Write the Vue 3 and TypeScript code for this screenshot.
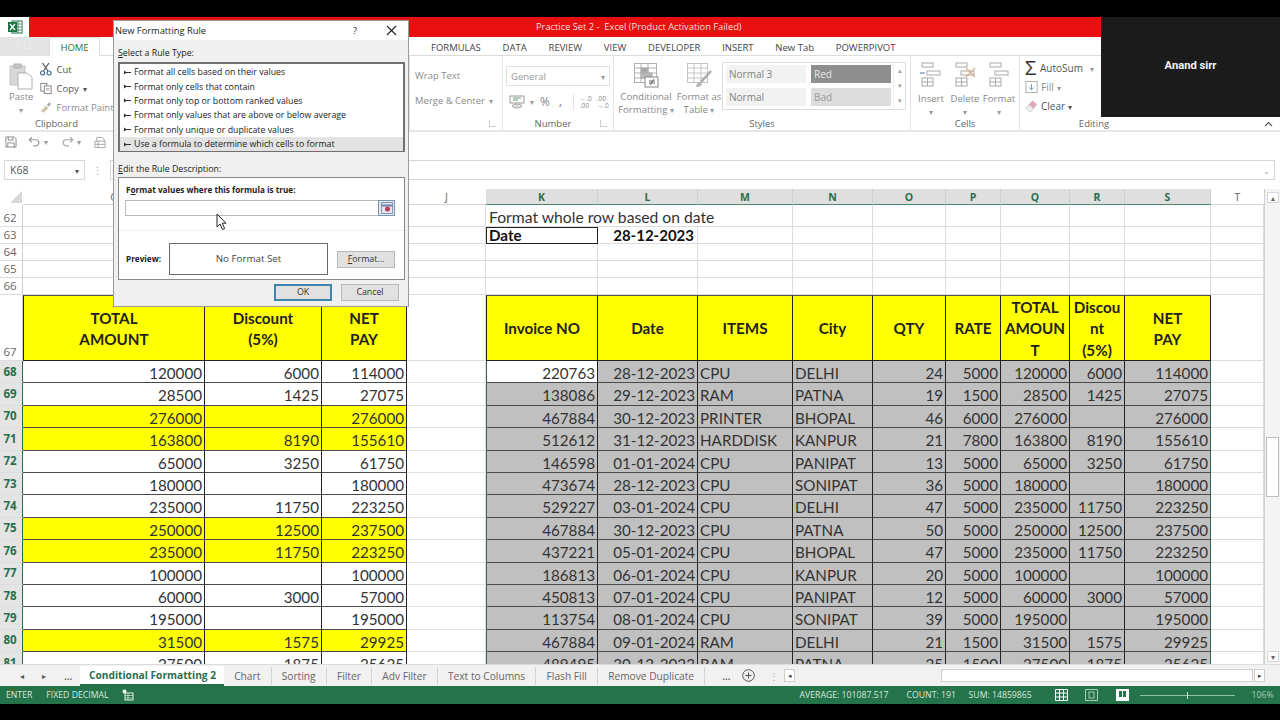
<template>
  <div class="screen">
    <div class="band-top"></div>

    <div class="titlebar">
      <div class="xl-box">
        <svg width="16" height="16" viewBox="0 0 16 16">
          <rect x="5" y="2" width="10" height="12" fill="#fff" stroke="#1f7244" />
          <path d="M8 5h6M8 8h6M8 11h6M11 2v12" stroke="#1f7244" stroke-width=".8" />
          <rect x="1" y="3" width="9" height="10" fill="#1f7244" />
          <path d="M3 5l5 6M8 5l-5 6" stroke="#fff" stroke-width="1.3" />
        </svg>
      </div>
      <div class="title">Practice Set 2 -&nbsp; Excel (Product Activation Failed)</div>
    </div>

    <div class="tabs">
      <div class="tab-file">FILE</div>
      <div class="tab-home">HOME</div>
      <div v-for="t in ribbonTabs" :key="t" class="tab">{{ t }}</div>
    </div>

    <div class="ribbon">
      <section class="grp g-clip">
        <div class="grp-body clip-body">
          <div class="big paste">
            <svg width="24" height="27" viewBox="0 0 24 27">
              <rect x="1" y="3" width="15" height="19" fill="#d8d8d8" stroke="#c4c4c4" />
              <rect x="5" y="1" width="7" height="4" fill="#c4c4c4" stroke="#b0b0b0" />
              <path d="M9 10h9l5 4v12H9z" fill="#fff" stroke="#b0b0b0" />
            </svg>
            <span>Paste</span>
            <i class="car">▾</i>
          </div>
          <div class="stack">
            <div class="si">
              <svg width="12" height="14" viewBox="0 0 12 14" fill="none" stroke="#3f6f9f" stroke-width="1.2">
                <circle cx="2.5" cy="11" r="2" />
                <circle cx="9" cy="11" r="2" />
                <path d="M3.5 9L9 1M8 9L2.5 1" stroke="#555" />
              </svg>
              Cut
            </div>
            <div class="si">
              <svg width="12" height="13" viewBox="0 0 14 14" fill="#fff" stroke="#777">
                <rect x="1" y="1" width="7" height="9" />
                <rect x="5" y="4" width="8" height="9" />
                <path d="M7 7h4M7 9h4" stroke-width=".7" />
              </svg>
              Copy <i class="car dark">▾</i>
            </div>
            <div class="si faint">
              <svg width="12" height="13" viewBox="0 0 14 14">
                <path d="M1 11l6-6 3 3-6 5z" fill="#d0c4a8" />
                <path d="M8 4l3-3 2 2-3 3z" fill="#a9a9a9" />
              </svg>
              Format Painte
            </div>
          </div>
        </div>
        <div class="grp-label">Clipboard</div>
      </section>

      <section class="grp g-align">
        <div class="grp-body align-body">
          <div class="si faint">Wrap Text</div>
          <div class="si faint">Merge &amp; Center <i class="car">▾</i></div>
        </div>
        <div class="grp-label"></div>
        <span class="launcher"></span>
      </section>

      <section class="grp g-num">
        <div class="grp-body num-body">
          <div class="combo">General <i class="car">▾</i></div>
          <div class="num-tools">
            <svg width="16" height="14" viewBox="0 0 16 14">
              <rect x="1" y="1" width="14" height="7" fill="#fff" stroke="#999" />
              <path d="M4 3h8M4 5h5" stroke="#6a9a7c" />
              <ellipse cx="8" cy="11" rx="5" ry="2" fill="#ddd" stroke="#aaa" />
            </svg>
            <i class="car">▾</i>
            <span class="pct">%</span>
            <span class="comma">,</span>
            <b class="tool-sep"></b>
            <span class="dec">←.0<br />.00</span>
            <span class="dec">.00<br />→.0</span>
          </div>
        </div>
        <div class="grp-label">Number</div>
        <span class="launcher"></span>
      </section>

      <section class="grp g-styles">
        <div class="grp-body styles-body">
          <div class="big cf">
            <svg width="25" height="25" viewBox="0 0 25 25" fill="none" stroke="#b0b0b0">
              <rect x=".5" y=".5" width="22" height="19" fill="#fff" />
              <path d="M.5 5h22M.5 10h22M.5 15h22M7 .5v19M14 .5v19" />
              <rect x="7" y="5" width="7" height="5" fill="#a8a8a8" />
              <rect x="7" y="10" width="11" height="5" fill="#b8b8b8" />
              <rect x="11" y="14" width="13" height="10" fill="#fff" stroke="#888" />
              <path d="M15 20h6M15 18h6M20 16l-4 6" stroke="#666" />
            </svg>
            <span>Conditional<br />Formatting <i class="car">▾</i></span>
          </div>
          <div class="big fat">
            <svg width="25" height="25" viewBox="0 0 25 25" fill="none" stroke="#c4c4c4">
              <rect x=".5" y=".5" width="20" height="19" fill="#fff" />
              <path d="M.5 5h20M.5 10h20M.5 15h20M7 .5v19M14 .5v19" />
              <path d="M24 8L14 19" stroke="#aaa" stroke-width="2.5" />
              <path d="M9 24c0-3 2-5 4-5l2 2c0 2-3 3-6 3z" fill="#b5b5b5" stroke="none" />
            </svg>
            <span>Format as<br />Table <i class="car">▾</i></span>
          </div>
          <div class="gallery">
            <div class="swatches">
              <div class="sw">Normal 3</div>
              <div class="sw red">Red</div>
              <div class="sw">Normal</div>
              <div class="sw bad">Bad</div>
            </div>
            <div class="gal-arrows">
              <span>▴</span>
              <span>▾</span>
              <span>▾</span>
            </div>
          </div>
        </div>
        <div class="grp-label">Styles</div>
      </section>

      <section class="grp g-cells">
        <div class="grp-body cells-body">
          <div v-for="c in cellTools" :key="c" class="big cell-tool">
            <svg width="24" height="26" viewBox="0 0 24 26" fill="none" stroke="#aaa">
              <rect x="3" y="1" width="11" height="4" />
              <rect x="8" y="9" width="13" height="4" />
              <rect x="3" y="16" width="11" height="8" />
              <path d="M8.5 16v8M3 20h11" />
              <path v-if="c === 'Delete'" d="M13 6l9 9M22 6l-9 9" stroke="#d8ae88" stroke-width="1.2" />
              <path v-if="c === 'Insert'" d="M1 11h5" stroke="#7f9fbf" stroke-width="1.4" />
            </svg>
            <span>{{ c }}</span>
            <i class="car">▾</i>
          </div>
        </div>
        <div class="grp-label">Cells</div>
      </section>

      <section class="grp g-edit">
        <div class="grp-body edit-body">
          <div class="si"><span class="sigma">Σ</span> AutoSum <i class="car gap-car">▾</i></div>
          <div class="si faint">
            <svg width="13" height="14" viewBox="0 0 14 14" fill="#fff" stroke="#aaa">
              <rect x="1" y="1" width="12" height="12" />
              <path d="M7 4v6M4.5 7.5L7 10l2.5-2.5" stroke="#6a8fb0" fill="none" />
            </svg>
            Fill <i class="car">▾</i>
          </div>
          <div class="si">
            <svg width="13" height="14" viewBox="0 0 14 14">
              <path d="M1 9l7-8 5 4-6 8H4z" fill="#d9a9ba" />
              <path d="M1 9l3 4h3l2-3-4-4z" fill="#eee" stroke="#ccc" stroke-width=".5" />
            </svg>
            Clear <i class="car dark">▾</i>
          </div>
        </div>
        <div class="grp-label">Editing</div>
        <svg class="collapse" width="9" height="6" viewBox="0 0 9 6" fill="none" stroke="#555" stroke-width="1.2">
          <path d="M1 5l3.5-3.5L8 5" />
        </svg>
      </section>
    </div>

    <div class="qat">
      <svg class="q-save" width="12" height="12" viewBox="0 0 13 13" fill="none" stroke="#8a8a8a">
        <path d="M1 1h9l2 2v9H1zM3.5 1v3.5h5V1M3 12V7.5h7V12" />
      </svg>
      <svg width="13" height="11" viewBox="0 0 15 12" fill="none" stroke="#9a9a9a" stroke-width="1.4">
        <path d="M1.5 4H9a3.5 3.5 0 0 1 0 7H6M4.5 1L1.5 4l3 3" />
      </svg>
      <i class="car">▾</i>
      <svg class="qat-redo" width="13" height="11" viewBox="0 0 15 12" fill="none" stroke="#a8a8a8" stroke-width="1.4">
        <path d="M13.5 4H6a3.5 3.5 0 0 0 0 7h3M10.5 1l3 3-3 3" />
      </svg>
      <i class="car">▾</i>
      <svg class="qat-doc" width="12" height="13" viewBox="0 0 13 13" fill="none" stroke="#a5a5a5">
        <path d="M1 5h11v7H1zM1 8.5h11M4.5 5v7M3 5V1h6l2 2v2" />
      </svg>
    </div>

    <div class="formula">
      <div class="namebox">K68 <i class="car dark">▾</i></div>
      <div class="dots">⋮</div>
      <div class="fx-input"><i class="car">⌄</i></div>
    </div>

    <div class="work">
      <div class="sheet">
        <div class="corner"><span class="tri"></span></div>
        <div
          v-for="(col, i) in columns"
          :key="i"
          class="colhead"
          :class="{ sel: selectedCols.includes(col) }"
        >
          {{ col }}
        </div>

        <template v-for="n in topRows" :key="n">
          <div class="rowhead">{{ n }}</div>
          <template v-if="n === 62">
            <div v-for="i in 4" :key="i" class="c"></div>
            <div class="c headline">Format whole row based on date</div>
            <div v-for="i in 7" :key="'x' + i" class="c"></div>
          </template>
          <template v-else-if="n === 63">
            <div v-for="i in 4" :key="i" class="c"></div>
            <div class="c date-box">Date</div>
            <div class="c date-val">28-12-2023</div>
            <div v-for="i in 8" :key="'x' + i" class="c"></div>
          </template>
          <template v-else>
            <div v-for="i in 14" :key="i" class="c"></div>
          </template>
        </template>

        <div class="rowhead tall">67</div>
        <template v-for="(h, i) in headers" :key="i">
          <div v-if="h === null" class="c"></div>
          <div v-else class="hd" :class="{ edge: i === 0 || i === 4 }"><span v-html="h"></span></div>
        </template>

        <template v-for="(row, r) in rows" :key="row.n">
          <div class="rowhead sel">{{ row.n }}</div>
          <div
            v-for="(v, i) in row.left"
            :key="'l' + i"
            class="c num bar"
            :class="{ yellow: row.hi }"
          >
            {{ v }}
          </div>
          <div class="c gap"></div>
          <div
            v-for="(v, i) in row.right"
            :key="'r' + i"
            class="c bar"
            :class="[
              textCols.includes(i) ? 'txt' : 'num',
              r === 0 && i === 0 ? 'active' : 'gray',
              { 'sel-l': i === 0, 'sel-r': i === 8 },
            ]"
          >
            {{ v }}
          </div>
          <div class="c"></div>
        </template>
      </div>

      <div class="vscroll">
        <div class="vbtn">▴</div>
        <div class="vtrack"><div class="vthumb"></div></div>
        <div class="vbtn low">▾</div>
      </div>
    </div>

    <div class="sheetbar">
      <span class="nav">◂</span>
      <span class="nav">▸</span>
      <span class="nav dots-h">...</span>
      <div class="stab on">Conditional Formatting 2</div>
      <div v-for="s in sheetTabs" :key="s" class="stab">{{ s }}</div>
      <span class="nav more">...</span>
      <svg class="plus" width="13" height="13" viewBox="0 0 13 13" fill="none" stroke="#555">
        <circle cx="6.5" cy="6.5" r="5.8" />
        <path d="M6.5 3.5v6M3.5 6.5h6" />
      </svg>
      <span class="nav vdots">⋮</span>
      <div class="hbtn">◂</div>
      <div class="htrack"><div class="hthumb"></div></div>
      <div class="hbtn">▸</div>
    </div>

    <div class="status">
      <span>ENTER</span>
      <span class="st-fixed">FIXED DECIMAL</span>
      <svg class="st-macro" width="12" height="12" viewBox="0 0 12 12" fill="none" stroke="#dfeee5">
        <rect x="3" y="4" width="8" height="7" />
        <path d="M3 6.5h8M3 9h8M6 4v7" stroke-width=".7" />
        <circle cx="2.5" cy="2.5" r="2" fill="#fff" stroke="none" />
      </svg>
      <span class="st-avg">AVERAGE: 101087.517</span>
      <span class="st-count">COUNT: 191</span>
      <span class="st-sum">SUM: 14859865</span>
      <svg class="v1" width="13" height="12" viewBox="0 0 13 12" fill="none" stroke="#fff">
        <path d="M.5.5h12v11H.5zM.5 4h12M.5 8h12M4.5.5v11M8.5.5v11" />
      </svg>
      <svg class="v2" width="13" height="12" viewBox="0 0 13 12" fill="none" stroke="#a8cdb8">
        <path d="M.5.5h12v11H.5z" />
        <rect x="4" y="3" width="5" height="6" />
      </svg>
      <svg class="v3" width="13" height="12" viewBox="0 0 13 12">
        <rect width="13" height="12" fill="#fff" />
        <rect x="3" y="2" width="3" height="6" fill="#24734a" />
        <rect x="7" y="2" width="3" height="6" fill="#24734a" />
      </svg>
      <div class="zoom-slide"><i></i></div>
      <span class="st-zoom">106%</span>
    </div>

    <div class="band-bottom"></div>

    <div class="tile">Anand sirr</div>

    <div class="dlg">
      <div class="dlg-title">
        <span>New Formatting Rule</span>
        <span class="q">?</span>
        <svg class="x" width="11" height="11" viewBox="0 0 11 11" stroke="#222" stroke-width="1.1">
          <path d="M1 1l9 9M10 1l-9 9" />
        </svg>
      </div>
      <div class="dlg-body">
        <div class="lbl"><u>S</u>elect a Rule Type:</div>
        <div class="rulelist">
          <div v-for="(rule, i) in ruleTypes" :key="rule" class="rule" :class="{ picked: i === 5 }">
            <svg class="arrow" width="7" height="5" viewBox="0 0 7 5">
              <path d="M0 2.5h7" stroke="#333" />
              <path d="M0 .5l3 2-3 2z" fill="#333" />
            </svg>
            {{ rule }}
          </div>
        </div>
        <div class="lbl edit"><u>E</u>dit the Rule Description:</div>
        <div class="desc">
          <div class="b-lbl f-lbl">F<u>o</u>rmat values where this formula is true:</div>
          <div class="ref-input">
            <div class="ref-btn">
              <svg width="12" height="12" viewBox="0 0 12 12">
                <rect x=".5" y=".5" width="11" height="11" fill="#dfe6f0" stroke="#8899b5" />
                <path d="M.5 3.5h11" stroke="#6f86ad" stroke-width="2" />
                <circle cx="6.5" cy="7" r="2.5" fill="#c23b52" />
              </svg>
            </div>
          </div>
          <div class="desc-rule"></div>
          <div class="pv-row">
            <span class="b-lbl">Preview:</span>
            <div class="preview">No Format Set</div>
            <div class="btn fmt"><u>F</u>ormat...</div>
          </div>
        </div>
        <div class="actions">
          <div class="btn ok">OK</div>
          <div class="btn">Cancel</div>
        </div>
      </div>
      <svg class="cursor" width="12" height="18" viewBox="0 0 12 18">
        <path d="M1 1v13l3-3 2.5 5.5 2.2-1-2.500-5.300H10z" fill="#fff" stroke="#222" stroke-width="1" />
      </svg>
    </div>
  </div>
</template>

<script setup lang="ts">
interface SheetRow {
  n: number;
  hi: boolean;
  left: string[];
  right: string[];
}

const ribbonTabs = ["FORMULAS", "DATA", "REVIEW", "VIEW", "DEVELOPER", "INSERT", "New Tab", "POWERPIVOT"];
const cellTools = ["Insert", "Delete", "Format"];
// H and I sit fully behind the dialog
const columns = ["G", "", "", "J", "K", "L", "M", "N", "O", "P", "Q", "R", "S", "T"];
const selectedCols = ["K", "L", "M", "N", "O", "P", "Q", "R", "S"];
const topRows = [62, 63, 64, 65, 66];
const textCols = [2, 3];
const sheetTabs = ["Chart", "Sorting", "Filter", "Adv Filter", "Text to Columns", "Flash Fill", "Remove Duplicate"];

const ruleTypes = [
  "Format all cells based on their values",
  "Format only cells that contain",
  "Format only top or bottom ranked values",
  "Format only values that are above or below average",
  "Format only unique or duplicate values",
  "Use a formula to determine which cells to format",
];

const headers: (string | null)[] = [
  "TOTAL<br>AMOUNT",
  "Discount<br>(5%)",
  "NET<br>PAY",
  null,
  "Invoice NO",
  "Date",
  "ITEMS",
  "City",
  "QTY",
  "RATE",
  "TOTAL<br>AMOUN<br>T",
  "Discou<br>nt<br>(5%)",
  "NET<br>PAY",
  null,
];

// invoice, date, item, city, qty, rate, total, discount, net
const raw: string[][] = [
  ["220763", "28-12-2023", "CPU", "DELHI", "24", "5000", "120000", "6000", "114000"],
  ["138086", "29-12-2023", "RAM", "PATNA", "19", "1500", "28500", "1425", "27075"],
  ["467884", "30-12-2023", "PRINTER", "BHOPAL", "46", "6000", "276000", "", "276000"],
  ["512612", "31-12-2023", "HARDDISK", "KANPUR", "21", "7800", "163800", "8190", "155610"],
  ["146598", "01-01-2024", "CPU", "PANIPAT", "13", "5000", "65000", "3250", "61750"],
  ["473674", "28-12-2023", "CPU", "SONIPAT", "36", "5000", "180000", "", "180000"],
  ["529227", "03-01-2024", "CPU", "DELHI", "47", "5000", "235000", "11750", "223250"],
  ["467884", "30-12-2023", "CPU", "PATNA", "50", "5000", "250000", "12500", "237500"],
  ["437221", "05-01-2024", "CPU", "BHOPAL", "47", "5000", "235000", "11750", "223250"],
  ["186813", "06-01-2024", "CPU", "KANPUR", "20", "5000", "100000", "", "100000"],
  ["450813", "07-01-2024", "CPU", "PANIPAT", "12", "5000", "60000", "3000", "57000"],
  ["113754", "08-01-2024", "CPU", "SONIPAT", "39", "5000", "195000", "", "195000"],
  ["467884", "09-01-2024", "RAM", "DELHI", "21", "1500", "31500", "1575", "29925"],
  ["489495", "30-12-2023", "RAM", "PATNA", "25", "1500", "27500", "1875", "25625"],
];
const highlighted = [2, 3, 7, 8, 12];

const rows: SheetRow[] = raw.map((r, i) => ({
  n: 68 + i,
  hi: highlighted.includes(i),
  left: r.slice(6),
  right: r,
}));
</script>

<style>
html,
body {
  margin: 0;
  background: #000;
}
</style>

<style scoped>
.screen {
  position: relative;
  width: 1280px;
  height: 720px;
  overflow: hidden;
  display: flex;
  flex-direction: column;
  background: #fff;
  font-family: "Open Sans", "Noto Sans", sans-serif;
  font-size: 10px;
  color: #555;
}
i {
  font-style: normal;
}
.car {
  font-size: 8px;
  color: #999;
}
.car.dark {
  color: #555;
}
.band-top {
  height: 17px;
  background: #000;
}
.band-bottom {
  height: 16px;
  background: #000;
}

.titlebar {
  height: 20px;
  display: flex;
  background: #e81010;
  position: relative;
}
.xl-box {
  width: 29px;
  background: #fff;
  display: flex;
  align-items: center;
  justify-content: center;
}
.title {
  position: absolute;
  left: 536px;
  top: 3px;
  font-size: 9.3px;
  color: #f6dcdc;
  white-space: nowrap;
}

.tabs {
  height: 19px;
  display: flex;
  align-items: center;
  gap: 21.8px;
  border-bottom: 1px solid #dcdcdc;
  color: #444;
  font-size: 9.5px;
  box-sizing: border-box;
  padding-top: 2px;
}
.tab-file {
  width: 49px;
  height: 19px;
  margin-top: -2px;
  background: #e4e4e4;
  color: #eee;
  text-align: center;
  line-height: 18px;
}
.tab-home {
  width: 51px;
  margin-left: -21.8px;
  margin-top: -2px;
  height: 19px;
  box-sizing: border-box;
  border: 1px solid #dcdcdc;
  border-bottom-color: #fff;
  color: #24734a;
  text-align: center;
  line-height: 20px;
}
.tab-home + .tab {
  margin-left: 309.2px;
}

.ribbon {
  height: 74px;
  display: flex;
  border-bottom: 2px solid #e6e6e6;
}
.grp {
  display: flex;
  flex-direction: column;
  border-right: 1px solid #e4e4e4;
  box-sizing: border-box;
  position: relative;
}
.grp-body {
  height: 62px;
  box-sizing: border-box;
}
.grp-label {
  height: 12px;
  text-align: center;
  font-size: 9.5px;
  line-height: 12px;
  color: #666;
}
.launcher {
  position: absolute;
  right: 6px;
  bottom: 3px;
  width: 6px;
  height: 6px;
  border-left: 1px solid #ccc;
  border-bottom: 1px solid #ccc;
}
.g-clip {
  width: 410px;
}
.g-clip .grp-label {
  width: 113px;
}
.g-align {
  width: 93px;
}
.g-num {
  width: 111px;
}
.g-num .grp-label {
  padding-right: 10px;
}
.g-styles {
  width: 297px;
}
.g-cells {
  width: 109px;
}
.g-edit {
  width: 260px;
  border-right: none;
}
.clip-body {
  display: flex;
  padding: 7px 0 0 9px;
  gap: 7px;
}
.big {
  display: flex;
  flex-direction: column;
  align-items: center;
  text-align: center;
  line-height: 13px;
  color: #888;
  font-size: 9.6px;
}
.paste span {
  margin-top: 0;
}
.stack {
  display: flex;
  flex-direction: column;
  gap: 3px;
  margin-top: -3px;
  padding-top: 1px;
}
.si {
  display: flex;
  align-items: center;
  gap: 4px;
  height: 16px;
  white-space: nowrap;
  font-size: 9.5px;
  color: #555;
}
.si.faint {
  color: #8c8c8c;
}
.align-body {
  padding: 11px 0 0 5px;
  display: flex;
  flex-direction: column;
  gap: 9px;
}
.num-body {
  padding: 10px 3px;
}
.combo {
  height: 18px;
  border: 1px solid #e0e0e0;
  color: #999;
  display: flex;
  justify-content: space-between;
  align-items: center;
  padding: 0 4px;
  font-size: 9.5px;
}
.num-tools {
  display: flex;
  align-items: center;
  gap: 5px;
  margin-top: 7px;
  padding-left: 3px;
  color: #888;
}
.pct {
  font-size: 12px;
  margin-left: 1px;
}
.comma {
  font-weight: 700;
  margin: 0 6px 0 4px;
}
.tool-sep {
  width: 1px;
  height: 16px;
  background: #e0e0e0;
  margin-right: 1px;
}
.dec {
  font-size: 6.5px;
  line-height: 7px;
  white-space: nowrap;
}
.styles-body {
  display: flex;
  padding-top: 7px;
}
.cf {
  width: 58px;
  margin-left: 3px;
  align-items: center;
}
.fat {
  width: 48px;
  margin-left: 0;
}
.cf span,
.fat span {
  margin-top: 2px;
  white-space: nowrap;
}
.gallery {
  width: 184px;
  height: 48px;
  margin-top: -1px;
  border: 1px solid #ddd;
  margin-left: -1px;
  display: flex;
  box-sizing: border-box;
}
.swatches {
  flex: 1;
  display: grid;
  grid-template-columns: 80px 80px;
  grid-auto-rows: 18px;
  gap: 5px 5px;
  padding: 2px 2px 0 3px;
  box-sizing: border-box;
}
.sw {
  background: #f2f2f2;
  padding-left: 3px;
  font-size: 10px;
  line-height: 18px;
  color: #808080;
}
.sw.red {
  background: #8e8e8e;
  color: #e8e8e8;
}
.sw.bad {
  background: #dcdcdc;
  color: #999;
}
.gal-arrows {
  width: 13px;
  margin-left: auto;
  border-left: 1px solid #eee;
  display: flex;
  flex-direction: column;
  align-items: center;
  font-size: 7px;
  color: #999;
  line-height: 15px;
}
.cells-body {
  display: flex;
  padding: 6px 0 0 4.5px;
  gap: 3px;
}
.cell-tool {
  width: 31px;
}
.cell-tool span {
  margin-top: 4px;
}
.edit-body {
  padding-top: 4px;
  padding-left: 5px;
  display: flex;
  flex-direction: column;
  gap: 3px;
}
.edit-body .si {
  gap: 3px;
  font-size: 10px;
}
.sigma {
  font-size: 20px;
  line-height: 16px;
  color: #333;
  width: 12px;
}
.gap-car {
  margin-left: 4px;
}
.g-edit .grp-label {
  width: 148px;
}
.collapse {
  position: absolute;
  right: 7px;
  bottom: 3px;
}

.qat {
  height: 27px;
  display: flex;
  align-items: flex-start;
  padding: 4px 0 0 5px;
  box-sizing: border-box;
  gap: 3px;
}
.q-save {
  margin-right: 8px;
}
.qat-redo {
  margin-left: 10px;
}
.qat-doc {
  margin-left: 10px;
}

.formula {
  height: 22px;
  display: flex;
  align-items: center;
  padding: 0 5px 0 4px;
  box-sizing: border-box;
}
.namebox {
  width: 81px;
  height: 20px;
  box-sizing: border-box;
  border: 1px solid #d6d6d6;
  display: flex;
  align-items: center;
  justify-content: space-between;
  padding: 0 5px;
  font-size: 10.5px;
  color: #555;
}
.dots {
  width: 25px;
  text-align: center;
  font-size: 11px;
  color: #aaa;
}
.fx-input {
  flex: 1;
  height: 20px;
  box-sizing: border-box;
  border: 1px solid #d6d6d6;
  display: flex;
  justify-content: flex-end;
  align-items: center;
  padding-right: 4px;
}

.work {
  height: 483px;
  display: flex;
  padding-top: 8px;
  box-sizing: border-box;
}
.sheet {
  flex: none;
  width: 1264px;
  height: 475px;
  overflow: hidden;
  display: grid;
  grid-template-columns: 23px 182px 117px 85px 79px 112px 100px 95px 80px 73px 55px 69px 55px 86px 53px;
  grid-template-rows: 16px 22px 17px 17px 17px 17px 66px;
  grid-auto-rows: 22.4px;
  font-family: Lato, "Liberation Sans", sans-serif;
  font-size: 15.2px;
  color: #333;
}
.corner {
  position: relative;
}
.tri {
  position: absolute;
  right: 1px;
  bottom: 2px;
  border-left: 12px solid transparent;
  border-bottom: 12px solid #d8d8d8;
}
.colhead {
  text-align: center;
  font-family: "Open Sans", sans-serif;
  font-size: 10.5px;
  line-height: 16px;
  color: #666;
  border-bottom: 1px solid #d4d4d4;
}
.colhead.sel {
  background: #dfdfdf;
  color: #2b6e4c;
  font-weight: 700;
  border-right: 1px solid #cfcfcf;
  border-bottom: 1.5px solid #4b8a6a;
  box-sizing: border-box;
}
.rowhead {
  display: flex;
  align-items: flex-end;
  justify-content: center;
  font-family: "Open Sans", sans-serif;
  font-size: 11.5px;
  color: #666;
  border-bottom: 1px solid #ddd;
  border-right: 1px solid #cfcfcf;
  line-height: 16px;
  padding-right: 2px;
  box-sizing: border-box;
}
.rowhead.sel {
  background: #e4e4e4;
  color: #2b6e4c;
  font-weight: 700;
  align-items: center;
  border-right: 1.5px solid #2b6e4c;
}
.c {
  box-sizing: border-box;
  border-right: 1px solid #dcdcdc;
  border-bottom: 1px solid #dcdcdc;
  white-space: nowrap;
  overflow: hidden;
  min-width: 0;
  line-height: 20px;
  padding: 0 2px;
}
.headline {
  grid-column: span 3;
  overflow: visible;
  font-size: 15.7px;
  line-height: 24px;
  color: #333;
  padding-left: 3px;
}
.date-box {
  border: 1.5px solid #222;
  font-weight: 700;
  line-height: 14px;
  color: #111;
  padding-left: 2px;
}
.date-val {
  text-align: right;
  font-weight: 700;
  font-size: 15px;
  overflow: visible;
  color: #111;
  line-height: 16px;
  padding-right: 3px;
}
.hd {
  box-sizing: border-box;
  background: #ffff00;
  color: #222;
  font-weight: 700;
  text-align: center;
  display: flex;
  align-items: center;
  justify-content: center;
  border-right: 1px solid #222;
  border-top: 1px solid #555;
  border-bottom: 1.5px solid #222;
  line-height: 21.5px;
  padding-top: 2px;
  overflow: hidden;
}
.hd.edge {
  border-left: 1px solid #222;
}
.num {
  text-align: right;
}
.txt {
  text-align: left;
}
.bar {
  border-right: 1px solid #222;
  border-bottom: 1px solid #4a4a4a;
  line-height: 25px;
}
.yellow {
  background: #ffff00;
}
.gray {
  background: #c0c0c0;
}
.active {
  background: #fff;
}
.sel-l {
  border-left: 1.5px solid #2b6e4c;
}
.sel-r {
  border-right: 1.5px solid #2b6e4c;
}
.gap {
  border-color: #e2e2e2;
}

.vscroll {
  flex: 1;
  height: 475px;
  display: flex;
  flex-direction: column;
  align-items: center;
  border-left: 1px solid #cfcfcf;
  background: #f4f4f4;
  box-sizing: border-box;
  padding-top: 3px;
}
.vbtn {
  width: 12px;
  height: 11px;
  border: 1px solid #d5d5d5;
  background: #fff;
  color: #666;
  font-size: 8px;
  line-height: 10px;
  text-align: center;
  box-sizing: border-box;
}
.vbtn.low {
  margin: 2px 0;
}
.vtrack {
  flex: 1;
  width: 13px;
  padding-top: 234px;
  box-sizing: border-box;
}
.vthumb {
  height: 60px;
  background: #fff;
  border: 1px solid #bdbdbd;
  box-sizing: border-box;
}

.sheetbar {
  height: 22px;
  display: flex;
  align-items: center;
  background: #f1f1f1;
  border-top: 1px solid #ddd;
  box-sizing: border-box;
  padding-left: 20px;
  color: #666;
  font-size: 10.2px;
}
.nav {
  color: #555;
  font-size: 8px;
  width: 22px;
  text-align: left;
}
.dots-h {
  width: 16px;
  font-size: 10px;
  font-weight: 600;
}
.stab {
  padding: 0 10.2px;
  border-right: 1px solid #d4d4d4;
  line-height: 18px;
  white-space: nowrap;
}
.stab.on {
  font-weight: 700;
  color: #2b6e4c;
  background: #fff;
  border-right: none;
  border-bottom: 2px solid #2b6e4c;
  margin-top: 1px;
  padding: 0 0 0 9px;
  width: 144px;
  box-sizing: border-box;
}
.more {
  margin-left: 17px;
  font-size: 10px;
  font-weight: 600;
  width: 20px;
}
.plus {
  margin-right: 14px;
}
.vdots {
  width: 15px;
  font-size: 10px;
  color: #aaa;
}
.hbtn {
  width: 11px;
  height: 13px;
  border: 1px solid #cfcfcf;
  background: #fff;
  color: #444;
  font-size: 7px;
  line-height: 12px;
  text-align: center;
  box-sizing: border-box;
}
.htrack {
  width: 459px;
  height: 13px;
  padding-left: 146px;
  padding-right: 1px;
  box-sizing: border-box;
}
.hthumb {
  height: 100%;
  background: #fff;
  border: 1px solid #cfcfcf;
  box-sizing: border-box;
}

.status {
  height: 18px;
  background: #24734a;
  display: flex;
  align-items: center;
  padding-left: 6px;
  color: #d9e8df;
  font-size: 8.7px;
  white-space: nowrap;
}
.status span {
  flex: none;
}
.st-fixed {
  margin-left: 14px;
}
.st-macro {
  margin-left: 13px;
}
.st-avg {
  margin-left: 666px;
  width: 88px;
}
.st-count {
  margin-left: 19px;
  width: 49px;
}
.st-sum {
  margin-left: 13px;
  width: 62px;
}
.v1 {
  margin-left: 24px;
}
.v2 {
  margin-left: 17px;
}
.v3 {
  margin-left: 18px;
}
.zoom-slide {
  position: relative;
  width: 95px;
  height: 1px;
  margin-left: 11px;
  background: #8fc0a6;
}
.zoom-slide i {
  position: absolute;
  left: 47px;
  top: -3px;
  width: 1px;
  height: 7px;
  background: #cfe5d8;
}
.st-zoom {
  margin-left: 17px;
  color: #a8cdb8;
}

.tile {
  position: absolute;
  left: 1101px;
  top: 17px;
  width: 179px;
  height: 100px;
  padding-bottom: 3px;
  box-sizing: border-box;
  background: #1b1b1b;
  color: #f4f4f4;
  font-family: Roboto, "Open Sans", sans-serif;
  font-weight: 700;
  font-size: 11.2px;
  display: flex;
  align-items: center;
  justify-content: center;
}

.dlg {
  position: absolute;
  left: 113px;
  top: 20px;
  width: 296px;
  height: 287px;
  background: #f0f0f0;
  box-sizing: border-box;
  border: 1px solid #9a9a9a;
  color: #222;
  font-size: 8.8px;
}
.dlg-title {
  height: 19px;
  background: #fff;
  display: flex;
  align-items: center;
  padding-left: 1px;
  font-size: 9.3px;
  color: #222;
  position: relative;
}
.dlg-title .q {
  position: absolute;
  left: 239px;
}
.dlg-title .x {
  position: absolute;
  left: 272px;
  top: 4px;
}
.dlg-body {
  padding: 8px 3px 0 4px;
}
.lbl {
  line-height: 11px;
  margin-bottom: 3px;
}
.lbl.edit {
  margin-top: 12px;
  margin-bottom: 2px;
}
.rulelist {
  height: 90px;
  box-sizing: border-box;
  background: #fff;
  border: 2px solid #6f6f6f;
  padding-top: 1px;
}
.rule {
  height: 14.4px;
  line-height: 14px;
  padding-left: 4px;
  white-space: nowrap;
  color: #222;
  display: flex;
  align-items: center;
  gap: 3px;
}
.rule.picked {
  background: #e3e3e3;
}
.arrow {
  flex: none;
}
.desc {
  height: 103px;
  box-sizing: border-box;
  border: 1px solid #888;
  background: #fff;
  padding: 6px 9px 0 6px;
}
.b-lbl {
  font-weight: 700;
  font-size: 8.2px;
  color: #222;
  line-height: 12px;
}
.f-lbl {
  padding-left: 1px;
}
.ref-input {
  height: 16px;
  box-sizing: border-box;
  border: 1px solid #b9b9b9;
  margin-top: 4px;
  display: flex;
  justify-content: flex-end;
}
.ref-btn {
  width: 17px;
  height: 16px;
  box-sizing: border-box;
  margin: -1px -1px 0 0;
  border: 1px solid #6f96b8;
  background: #e6e6e6;
  display: flex;
  align-items: center;
  justify-content: center;
}
.desc-rule {
  height: 1px;
  background: #efefef;
  margin: 14px -9px 0 -6px;
}
.pv-row {
  display: flex;
  align-items: center;
  margin-top: 12px;
}
.pv-row .b-lbl {
  width: 44px;
  padding-left: 1px;
  box-sizing: border-box;
}
.preview {
  width: 159px;
  height: 32px;
  box-sizing: border-box;
  border: 1px solid #6a6a6a;
  text-align: center;
  line-height: 30px;
  font-size: 9.8px;
  color: #444;
}
.btn {
  width: 58px;
  height: 17px;
  box-sizing: border-box;
  border: 1px solid #b9b9b9;
  background: #e1e1e1;
  text-align: center;
  line-height: 15px;
  font-size: 8.8px;
  color: #333;
}
.btn.fmt {
  margin-left: 9px;
}
.actions {
  display: flex;
  justify-content: flex-end;
  gap: 9px;
  margin-top: 4px;
  padding-right: 6px;
}
.btn.ok {
  border: 2px solid #3d86ad;
  line-height: 13px;
}
.cursor {
  position: absolute;
  left: 102px;
  top: 192px;
}
</style>
